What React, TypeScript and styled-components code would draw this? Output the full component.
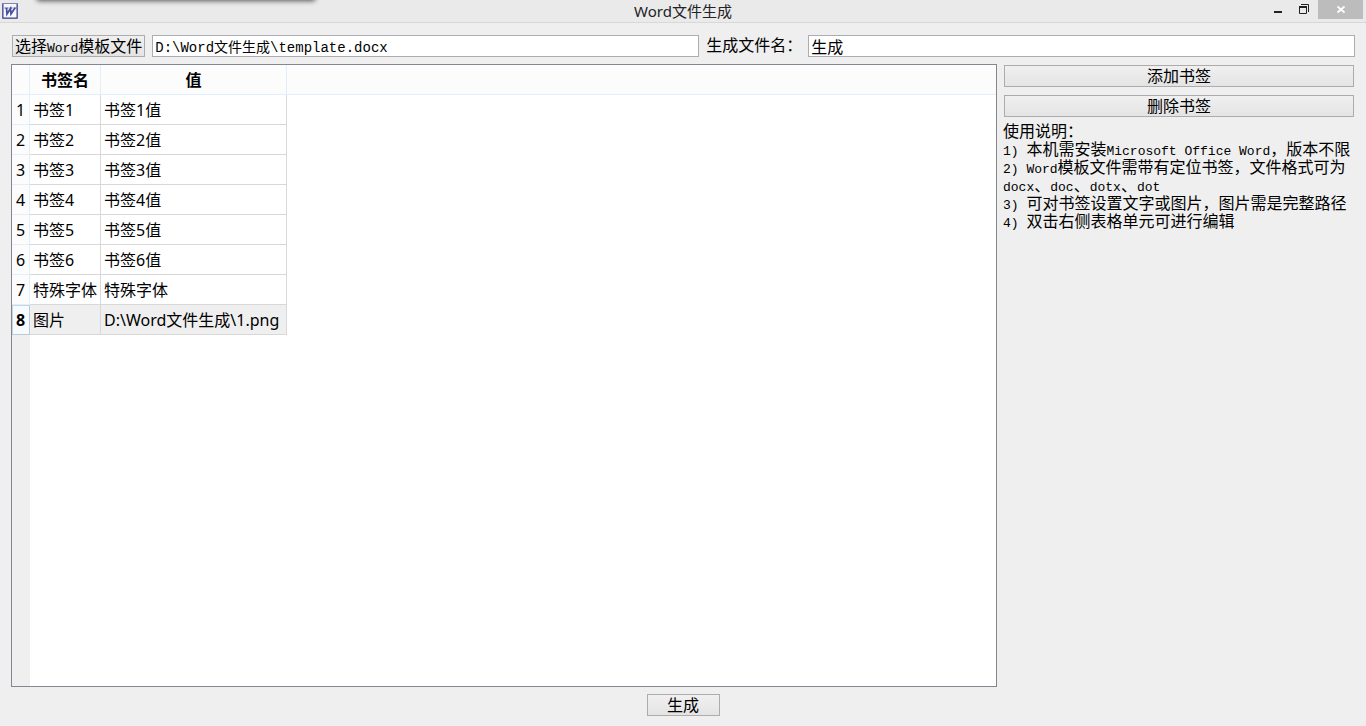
import React from "react";
import styled, { createGlobalStyle } from "styled-components";

const songti = `"Liberation Mono", "Noto Sans CJK SC", monospace`;
const yahei = `"Noto Sans", "Noto Sans CJK SC", sans-serif`;

const GlobalStyle = createGlobalStyle`
  *, *::before, *::after { box-sizing: border-box; }
  body { margin: 0; background: #efefef; color: #000; }
`;

const Window = styled.div`
  position: relative;
  display: flex;
  flex-direction: column;
  min-height: 100vh;
  background: #efefef;
`;

const TitleBar = styled.header`
  display: grid;
  grid-template-columns: 1fr auto 1fr;
  height: 23px;
  background: #eaeaea;
  border-bottom: 1px solid #d8d8d8;
`;

const AppIcon = styled.svg`
  width: 16px;
  height: 16px;
  margin: 3px 2px;
`;

const Title = styled.h1`
  margin: 0;
  font: 400 15px/23px ${yahei};
  color: #222;
`;

const Controls = styled.div`
  display: flex;
  justify-content: flex-end;
  padding-right: 3px;
`;

const ControlButton = styled.button<{ $close?: boolean }>`
  width: ${(p) => (p.$close ? 45 : 26)}px;
  height: 19px;
  padding: 0;
  border: 0;
  background: ${(p) => (p.$close ? "#bcbcbc" : "transparent")};
  svg { display: block; margin: 0 auto; }
`;

const DropShadow = styled.div`
  position: absolute;
  top: -4px;
  left: 38px;
  width: 276px;
  height: 4px;
  box-shadow: 0 0 5px 1px #555;
`;

const Main = styled.main`
  flex: 1;
  display: flex;
  flex-direction: column;
  gap: 7px;
  padding: 12px 11px 10px;
`;

const Toolbar = styled.div`
  display: flex;
  align-items: center;
  gap: 7px;
  padding-left: 1px;
`;

const Button = styled.button`
  height: 22px;
  padding: 2px 2px 0;
  border: 1px solid #acacac;
  background: linear-gradient(#f0f0f0, #e4e4e4);
  color: #000;
  font: 400 16px/20px ${songti};
  white-space: nowrap;
`;

const SubmitButton = styled(Button)`
  align-self: center;
  width: 73px;
`;

const Latin = styled.span`
  font-size: 13px;
  line-height: 1;
`;

const FieldLabel = styled.label`
  width: 95px;
  padding-top: 2px;
  font: 400 16px/20px ${songti};
  white-space: nowrap;
`;

const TextField = styled.input<{ $mixed?: boolean }>`
  flex: 1;
  min-width: 0;
  height: 22px;
  padding: 0 2px;
  border: 1px solid #abadb3;
  border-radius: 0;
  background: #fff;
  color: #000;
  font: 400 ${(p) => (p.$mixed ? 14 : 16)}px/20px ${songti};
  outline: none;
`;

const Workspace = styled.div`
  flex: 1;
  display: flex;
  gap: 6px;
`;

const TablePanel = styled.section`
  flex: 1;
  display: flex;
  flex-direction: column;
  border: 1px solid #828790;
  background: #fff;
`;

const TableTop = styled.div`
  background: linear-gradient(#fcfcfc 29px, #e5effa 29px, #e5effa 30px, transparent 30px);
`;

const Gutter = styled.div`
  flex: 1;
  width: 18px;
  background: #efefef;
`;

const Table = styled.table`
  width: 275px;
  border-collapse: separate;
  border-spacing: 0;
  table-layout: fixed;
  font: 400 16px/27px ${yahei};
`;

const ColumnHeader = styled.th<{ $width: number }>`
  width: ${(p) => p.$width}px;
  height: 30px;
  padding: 2px 0 0;
  border: solid #e3eefb;
  border-width: 0 1px 1px 0;
  background: #fcfcfc;
  font-weight: 700;
`;

const RowHeader = styled.th<{ $current: boolean }>`
  height: 30px;
  padding: 2px 0 0;
  border: solid #e3eefb;
  border-width: 0 1px 1px 0;
  background: #fcfcfc;
  font-weight: ${(p) => (p.$current ? 700 : 400)};
  ${(p) =>
    p.$current &&
    `border-color: #b8cadd; background: #f8fbfe; box-shadow: inset 1px 1px #c5d5e5;`}
`;

const Cell = styled.td<{ $current: boolean }>`
  height: 30px;
  padding: 2px 0 0 3px;
  border: solid #d8d8d8;
  border-width: 0 1px 1px 0;
  background: ${(p) => (p.$current ? "#efefef" : "#fff")};
  white-space: nowrap;
`;

const SidePanel = styled.aside`
  flex: 0 0 352px;
`;

const SideActions = styled.div`
  display: flex;
  flex-direction: column;
  gap: 8px;
  padding: 1px 1px 7px;
`;

const Help = styled.div`
  font: 400 16px/18px ${songti};
  p { margin: 0; }
`;

const rows: [string, string][] = [
  ["书签1", "书签1值"],
  ["书签2", "书签2值"],
  ["书签3", "书签3值"],
  ["书签4", "书签4值"],
  ["书签5", "书签5值"],
  ["书签6", "书签6值"],
  ["特殊字体", "特殊字体"],
  ["图片", "D:\\Word文件生成\\1.png"],
];

export default function App() {
  const current = rows.length - 1;
  return (
    <>
      <GlobalStyle />
      <Window>
        <DropShadow />
        <TitleBar>
          <AppIcon viewBox="0 0 16 16" aria-hidden="true">
            <rect x="0.500" y="0.500" width="15" height="15" fill="#f8f8ff" stroke="#8084b8" />
            <path d="M1 15V1M1 15h14V1" fill="none" stroke="#3c3f86" />
            <path d="M2.500 5h4M7.500 5h3M11.500 5h3" stroke="#4b51a0" />
            <path d="M4.500 5L5 11L8.500 5.500L9 11L13 5" fill="none" stroke="#4b51a0" strokeWidth="1.800" />
          </AppIcon>
          <Title>Word文件生成</Title>
          <Controls>
            <ControlButton aria-label="最小化">
              <svg width="26" height="19"><path d="M8 11h8v2H8z" fill="#222" /></svg>
            </ControlButton>
            <ControlButton aria-label="还原">
              <svg width="26" height="19">
                <path d="M7.500 6.500h7v7h-7zM9 4.500h7.500V12" fill="none" stroke="#222" />
                <path d="M7 6h8v2H7z" fill="#222" />
              </svg>
            </ControlButton>
            <ControlButton $close aria-label="关闭">
              <svg width="45" height="19"><path d="M19.500 6.500l7 6M26.500 6.500l-7 6" stroke="#fff" strokeWidth="1.800" /></svg>
            </ControlButton>
          </Controls>
        </TitleBar>
        <Main>
          <Toolbar>
            <Button type="button">选择<Latin>Word</Latin>模板文件</Button>
            <TextField $mixed aria-label="Word模板文件" defaultValue="D:\Word文件生成\template.docx" />
            <FieldLabel htmlFor="output">生成文件名：</FieldLabel>
            <TextField id="output" defaultValue="生成" />
          </Toolbar>
          <Workspace>
            <TablePanel>
              <TableTop>
                <Table>
                  <thead>
                    <tr>
                      <ColumnHeader $width={18} />
                      <ColumnHeader $width={71} scope="col">书签名</ColumnHeader>
                      <ColumnHeader $width={186} scope="col">值</ColumnHeader>
                    </tr>
                  </thead>
                  <tbody>
                    {rows.map(([name, value], i) => (
                      <tr key={name}>
                        <RowHeader scope="row" $current={i === current}>{i + 1}</RowHeader>
                        <Cell $current={i === current}>{name}</Cell>
                        <Cell $current={i === current}>{value}</Cell>
                      </tr>
                    ))}
                  </tbody>
                </Table>
              </TableTop>
              <Gutter />
            </TablePanel>
            <SidePanel>
              <SideActions>
                <Button type="button">添加书签</Button>
                <Button type="button">删除书签</Button>
              </SideActions>
              <Help>
                <p>使用说明：</p>
                <p><Latin>1) </Latin>本机需安装<Latin>Microsoft Office Word</Latin>，版本不限</p>
                <p><Latin>2) Word</Latin>模板文件需带有定位书签，文件格式可为<Latin>docx</Latin>、<Latin>doc</Latin>、<Latin>dotx</Latin>、<Latin>dot</Latin></p>
                <p><Latin>3) </Latin>可对书签设置文字或图片，图片需是完整路径</p>
                <p><Latin>4) </Latin>双击右侧表格单元可进行编辑</p>
              </Help>
            </SidePanel>
          </Workspace>
          <SubmitButton type="button">生成</SubmitButton>
        </Main>
      </Window>
    </>
  );
}
